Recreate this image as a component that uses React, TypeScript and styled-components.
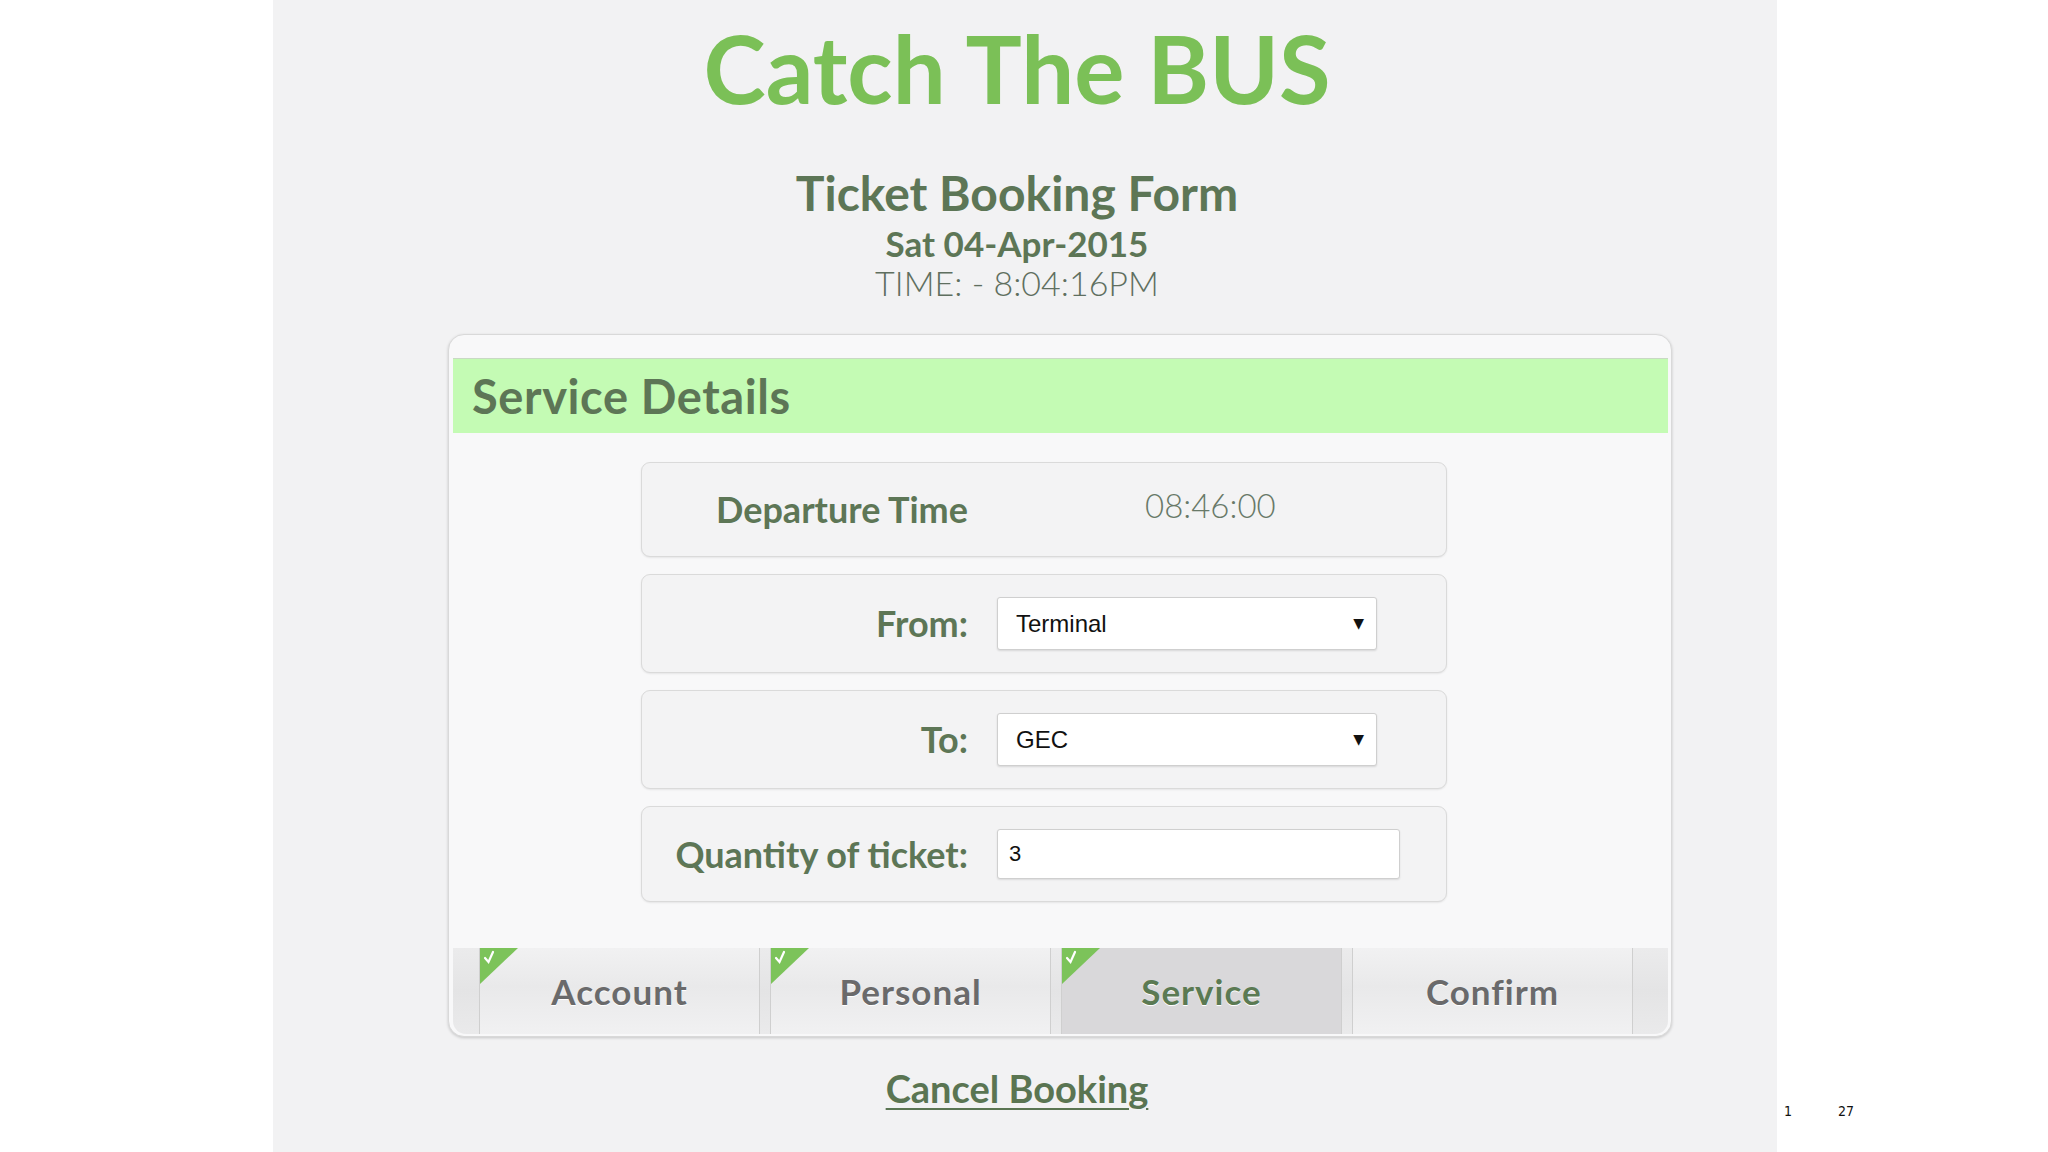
import * as React from 'react';
import styled, {createGlobalStyle} from "styled-components";

const GlobalStyle = createGlobalStyle`
  html, body {
    margin: 0;
    padding: 0;
    background: #ffffff;
  }
  body {
    font-family: "Century Gothic", Lato, "DejaVu Sans", sans-serif;
  }
  * {
    box-sizing: border-box;
  }
`;

const Screen = styled.div`
  display: grid;
  grid-template-columns: 273px 1504px 1fr;
  min-height: 1152px;
`;

const Gutter = styled.div`
  background: #ffffff;
`;

const Panel = styled.main`
  background: #f2f2f3;
  display: flex;
  flex-direction: column;
  padding-top: 18px;
`;

const Heading = styled.header`
  display: flex;
  flex-direction: column;
  align-items: center;
  padding-right: 16px;
`;

const Brand = styled.h1`
  margin: 0;
  font-size: 94px;
  line-height: 1.06;
  font-weight: 700;
  color: #7bc057;
`;

const FormTitle = styled.h2`
  margin: 47px 0 0 0;
  font-size: 48px;
  line-height: 1.15;
  font-weight: 700;
  color: #5d7656;
`;

const DateLine = styled.div`
  margin-top: 3px;
  font-size: 35px;
  line-height: 1.15;
  font-weight: 700;
  color: #5d7656;
`;

const TimeLine = styled.div`
  font-size: 34px;
  line-height: 1.2;
  font-weight: 300;
  color: #5f6f5f;
`;

const Card = styled.section`
  margin: 30px 0 0 175px;
  width: 1224px;
  height: 703px;
  padding: 23px 3px 2px 4px;
  background: #f8f8f9;
  border: 1px solid #d9d9d9;
  border-radius: 16px;
  box-shadow: 0 1px 3px rgba(0, 0, 0, 0.18);
  display: flex;
  flex-direction: column;
`;

const SectionBar = styled.div`
  height: 75px;
  background: #c4fbb4;
  border-top: 1px solid #c9d9c4;
  padding-left: 19px;
  display: flex;
  align-items: center;
`;

const SectionTitle = styled.h3`
  margin: 0;
  font-size: 47px;
  letter-spacing: 0.6px;
  font-weight: 700;
  color: #5d7656;
`;

const Fields = styled.div`
  display: flex;
  flex-direction: column;
  gap: 17px;
  margin: 29px 0 0 188px;
  width: 806px;
`;

const Field = styled.div<{ $min?: number }>`
  display: grid;
  grid-template-columns: 326px 1fr;
  column-gap: 29px;
  align-items: center;
  min-height: ${p => p.$min ?? 0}px;
  padding: 22px 0;
  background: #f3f3f4;
  border: 1px solid #dadada;
  border-radius: 9px;
  box-shadow: 0 1px 2px rgba(0, 0, 0, 0.08);
`;

const Label = styled.label`
  text-align: right;
  font-size: 36px;
  font-weight: 700;
  color: #5d7656;
`;

const Value = styled.div`
  padding-left: 148px;
  margin-bottom: 9px;
  font-size: 33px;
  font-weight: 300;
  color: #687968;
`;

const SelectWrap = styled.div`
  position: relative;
  width: 380px;
  height: 53px;
`;

const Select = styled.select`
  appearance: none;
  width: 100%;
  height: 100%;
  padding: 0 40px 0 18px;
  background: #ffffff;
  border: 1px solid #cfcfcf;
  border-radius: 3px;
  box-shadow: 0 1px 2px rgba(0, 0, 0, 0.12);
  font-family: "Liberation Sans", Arial, sans-serif;
  font-size: 24px;
  color: #111;
  outline: none;
`;

const Arrow = styled.span`
  position: absolute;
  right: 13px;
  top: 50%;
  transform: translateY(-52%);
  font-family: "DejaVu Sans", sans-serif;
  font-size: 14px;
  color: #111;
  pointer-events: none;
`;

const Input = styled.input`
  width: 403px;
  height: 50px;
  padding: 0 11px;
  background: #ffffff;
  border: 1px solid #cfcfcf;
  border-radius: 3px;
  box-shadow: 0 1px 2px rgba(0, 0, 0, 0.1);
  font-family: "Liberation Sans", Arial, sans-serif;
  font-size: 22px;
  color: #111;
  outline: none;
`;

const Steps = styled.nav`
  margin-top: auto;
  height: 86px;
  display: flex;
  gap: 10px;
  padding-left: 26px;
  background: linear-gradient(#ebebec, #e4e4e5 50%, #eaeaeb);
  border-radius: 0 0 13px 13px;
`;

const Step = styled.div<{ $active?: boolean }>`
  position: relative;
  width: 281px;
  display: flex;
  align-items: center;
  justify-content: center;
  border-left: 1px solid #cfcfcf;
  border-right: 1px solid #cfcfcf;
  background: ${p => p.$active
    ? "#d9d8da"
    : "linear-gradient(#f1f1f2, #e9e9ea 45%, #f1f1f2)"};
  font-size: 35px;
  letter-spacing: 1px;
  font-weight: 700;
  color: ${p => p.$active ? "#5b7a53" : "#6a6a6b"};
  text-shadow: 0 1px 0 #ffffff;
`;

const Done = styled.svg`
  position: absolute;
  top: 0;
  left: 0;
`;

const Cancel = styled.a`
  align-self: center;
  margin: 29px 16px 0 0;
  font-size: 38px;
  line-height: 1.2;
  font-weight: 700;
  color: #5a7552;
  text-decoration: underline;
  text-decoration-thickness: 2px;
  text-underline-offset: 5px;
  cursor: pointer;
`;

const Side = styled.aside`
  display: flex;
  align-items: flex-end;
  gap: 46px;
  padding: 0 0 33px 7px;
  font-family: "DejaVu Sans Condensed", "Liberation Sans Narrow", sans-serif;
  font-size: 14px;
  color: #111;
`;

const CheckMark = () => (
    <Done width="38" height="36" viewBox="0 0 38 36">
        <polygon points="0,0 38,0 0,36" fill="#7cc35a"/>
        <path d="M5 10 L8.5 14 L13 4" stroke="#ffffff" strokeWidth="2.2" fill="none" strokeLinecap="round"/>
    </Done>
);

const steps = [
    {name: "Account", done: true},
    {name: "Personal", done: true},
    {name: "Service", done: true, active: true},
    {name: "Confirm", done: false},
];

export default function App() {
    return (
        <Screen>
            <GlobalStyle/>
            <Gutter/>
            <Panel>
                <Heading>
                    <Brand>Catch The BUS</Brand>
                    <FormTitle>Ticket Booking Form</FormTitle>
                    <DateLine>Sat 04-Apr-2015</DateLine>
                    <TimeLine>TIME: - 8:04:16PM</TimeLine>
                </Heading>
                <Card>
                    <SectionBar>
                        <SectionTitle>Service Details</SectionTitle>
                    </SectionBar>
                    <Fields>
                        <Field $min={93}>
                            <Label>Departure Time</Label>
                            <Value>08:46:00</Value>
                        </Field>
                        <Field>
                            <Label>From:</Label>
                            <SelectWrap>
                                <Select defaultValue="Terminal">
                                    <option>Terminal</option>
                                    <option>GEC</option>
                                </Select>
                                <Arrow>▼</Arrow>
                            </SelectWrap>
                        </Field>
                        <Field>
                            <Label>To:</Label>
                            <SelectWrap>
                                <Select defaultValue="GEC">
                                    <option>Terminal</option>
                                    <option>GEC</option>
                                </Select>
                                <Arrow>▼</Arrow>
                            </SelectWrap>
                        </Field>
                        <Field>
                            <Label>Quantity of ticket:</Label>
                            <Input defaultValue="3"/>
                        </Field>
                    </Fields>
                    <Steps>
                        {steps.map(s => (
                            <Step key={s.name} $active={s.active}>
                                {s.done && <CheckMark/>}
                                {s.name}
                            </Step>
                        ))}
                    </Steps>
                </Card>
                <Cancel>Cancel Booking</Cancel>
            </Panel>
            <Side>
                <span>1</span>
                <span>27</span>
            </Side>
        </Screen>
    );
}
